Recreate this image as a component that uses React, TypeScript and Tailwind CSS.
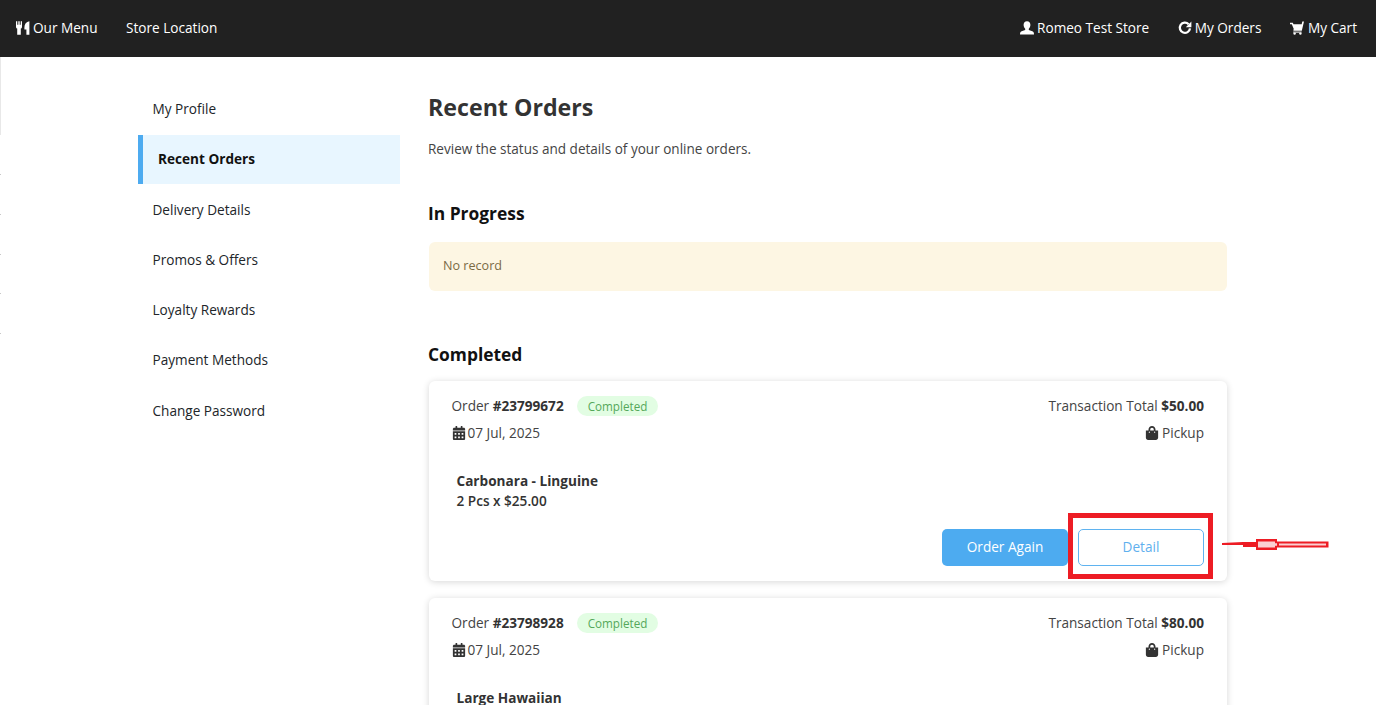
import { FaCalendarAlt, FaShoppingBag } from 'react-icons/fa';

type Order = {
  id: string;
  total: string;
  item: string;
  qty?: string;
  actions?: boolean;
};

const SIDE_LINKS = [
  'My Profile',
  'Recent Orders',
  'Delivery Details',
  'Promos & Offers',
  'Loyalty Rewards',
  'Payment Methods',
  'Change Password',
];

// the second card runs off the bottom of the window, only its first lines show
const ORDERS: Order[] = [
  { id: '23799672', total: '$50.00', item: 'Carbonara - Linguine', qty: '2 Pcs x $25.00', actions: true },
  { id: '23798928', total: '$80.00', item: 'Large Hawaiian' },
];

function CutleryIcon() {
  return (
    <svg width="14" height="14" viewBox="0 0 14 14" fill="currentColor" aria-hidden>
      <path d="M0 0.3h1.3v3.4h1V0.3h1.4v3.4h1V0.3H6v5.6c0 .9-.6 1.4-1.2 1.6v6.2H1.2V7.5C.6 7.3 0 6.8 0 5.9z" />
      <path d="M8.4 6.5C8.4 3 10.2.8 13.4.2v13.5h-3V8.4h-2z" />
    </svg>
  );
}

function UserIcon() {
  return (
    <svg width="14" height="14" viewBox="0 0 14 14" fill="currentColor" aria-hidden>
      <path d="M7 0.2c2.2 0 3.4 1.6 3.4 3.6 0 1.7-.7 3.2-1.6 4v1.1c1.7.5 4.3 1.2 4.8 2.3.3.6.4 1.6.4 2.4H0c0-.8.1-1.8.4-2.4.5-1.1 3.1-1.8 4.8-2.3V7.8c-.9-.8-1.6-2.3-1.6-4C3.6 1.8 4.8.2 7 .2z" />
    </svg>
  );
}

function RepeatIcon() {
  return (
    <svg width="14" height="14" viewBox="0 0 14 14" fill="none" aria-hidden>
      <path d="M10.6 3.2A5.1 5.1 0 1 0 12 7.4" stroke="currentColor" strokeWidth="2.3" />
      <path d="M13.4 0.6v5.6H7.8z" fill="currentColor" />
    </svg>
  );
}

function CartIcon() {
  return (
    <svg width="14" height="14" viewBox="0 0 14 14" fill="currentColor" aria-hidden>
      <path d="M0 1.8h2.8l.7 1.4h8.2L12.3.4H14l-2.2 9.4H3.6l-.5-1.2h.9L1.8 3.2H0z" />
      <path d="M3.2 10.6h8.4v1H3.2z" />
      <circle cx="4.6" cy="12.6" r="1.2" />
      <circle cx="10.4" cy="12.6" r="1.2" />
    </svg>
  );
}

function TopBar() {
  return (
    <header className="flex h-[57px] shrink-0 items-center justify-between bg-[#212121] pb-px pl-4 pr-[19px] text-[13.6px] text-white">
      <nav className="flex items-center gap-[28.5px]">
        <a className="flex items-center gap-[3px]">
          <CutleryIcon />
          Our Menu
        </a>
        <a>Store Location</a>
      </nav>
      <nav className="flex items-center gap-[28.5px]">
        <a className="flex items-center gap-[3px]">
          <UserIcon />
          Romeo Test Store
        </a>
        <a className="flex items-center gap-[3px]">
          <RepeatIcon />
          My Orders
        </a>
        <a className="flex items-center gap-1">
          <CartIcon />
          My Cart
        </a>
      </nav>
    </header>
  );
}

function Sidebar() {
  return (
    <aside className="ml-[138px] w-[262px] shrink-0 pt-[27px]">
      {SIDE_LINKS.map((label) =>
        label === 'Recent Orders' ? (
          <div
            key={label}
            className="mb-px mt-[0.7px] flex h-[49px] items-center border-l-[5px] border-[#4dabf0] bg-[#e8f6ff] pl-[15px] text-[13.6px] font-bold text-[#111]"
          >
            {label}
          </div>
        ) : (
          <div key={label} className="flex h-[50.2px] items-center pl-[14.5px] text-[13.6px] text-[#212529]">
            {label}
          </div>
        ),
      )}
    </aside>
  );
}

function OrderCard({ order }: { order: Order }) {
  return (
    <div className="mb-[17px] h-[200px] rounded-md bg-white px-[23px] pt-[15px] text-[13.6px] text-[#444] shadow-[0_1px_7px_rgba(0,0,0,0.16)]">
      <div className="flex h-5 items-center justify-between">
        <div className="flex items-center">
          <span>
            Order <b className="text-[#333]">#{order.id}</b>
          </span>
          <span className="ml-[13px] rounded-full bg-[#e2fde3] px-[11px] py-px text-[11.7px] leading-[18px] text-[#55a85a]">
            Completed
          </span>
        </div>
        <span>
          Transaction Total <b className="text-[#333]">{order.total}</b>
        </span>
      </div>
      <div className="mt-[7px] flex h-5 items-center justify-between">
        <span className="flex items-center gap-[2px]">
          <FaCalendarAlt size={14} className="text-[#333]" />
          07 Jul, 2025
        </span>
        <span className="flex items-center gap-[3px]">
          <FaShoppingBag size={14} className="text-[#333]" />
          Pickup
        </span>
      </div>
      <div className="mt-[28px] pl-[5px] font-semibold leading-[19.5px] text-[#333]">
        <div className="font-bold">{order.item}</div>
        {order.qty && <div>{order.qty}</div>}
      </div>
      {order.actions && (
        <div className="mt-[19px] flex justify-end gap-[10px]">
          <button
            type="button"
            className="h-[37px] w-[126px] rounded-[5px] bg-[#4dabf0] text-[13.6px] text-white"
          >
            Order Again
          </button>
          <button
            type="button"
            className="h-[37px] w-[126px] rounded-[5px] border border-[#5fb3f0] bg-white text-[13.6px] text-[#5fb0ee]"
          >
            Detail
          </button>
        </div>
      )}
    </div>
  );
}

function Annotation() {
  return (
    <>
      <div className="absolute left-[1068px] top-[513px] h-[66px] w-[145px] border-[5px] border-[#ed1c24]" />
      <svg
        className="absolute left-[1221px] top-[536px]"
        width="110"
        height="16"
        viewBox="0 0 110 16"
        aria-hidden
      >
        <path d="M1 7l21-1h13V3h21v2.5h51.5v6H56V14H35v-3H22V9H1z" fill="#ed1c24" />
        <path d="M37 5.4h17v1.8h2v2.6h-2v1.8H37zM58 7.6h47v1.8H58z" fill="#fbd0d2" />
      </svg>
    </>
  );
}

export default function App() {
  return (
    <div className="relative flex h-[705px] flex-col overflow-hidden bg-white font-['Open_Sans',sans-serif]">
      <TopBar />
      <main className="flex">
        <Sidebar />
        <section className="ml-[28.5px] w-[798.5px]">
          <h1 className="-ml-[0.5px] mt-[34px] text-[23.2px] font-bold leading-[32px] text-[#333]">Recent Orders</h1>
          <p className="-ml-[0.5px] mt-[16px] text-[13.55px] leading-5 text-[#444]">
            Review the status and details of your online orders.
          </p>
          <h2 className="-ml-[0.5px] mt-[41px] text-[17.4px] font-bold leading-[26px] text-[#111]">In Progress</h2>
          <div className="mt-[16px] flex h-[49px] items-center rounded-md bg-[#fdf6e3] px-[14.5px] text-[12.6px] text-[#7a6a45]">
            No record
          </div>
          <h2 className="-ml-[0.5px] mt-[50px] text-[17.4px] font-bold leading-[26px] text-[#111]">Completed</h2>
          <div className="mt-[14px]">
            {ORDERS.map((order) => (
              <OrderCard key={order.id} order={order} />
            ))}
          </div>
        </section>
      </main>
      <Annotation />
      <div className="absolute left-0 top-[57px] h-[78px] w-px bg-[#e8e8e8]" />
      <div className="absolute left-0 top-[174px] flex w-px flex-col gap-[38.8px]">
        <div className="h-px bg-[#c8c8c8]" />
        <div className="h-px bg-[#c8c8c8]" />
        <div className="h-px bg-[#c8c8c8]" />
        <div className="h-px bg-[#c8c8c8]" />
        <div className="h-px bg-[#c8c8c8]" />
      </div>
    </div>
  );
}
